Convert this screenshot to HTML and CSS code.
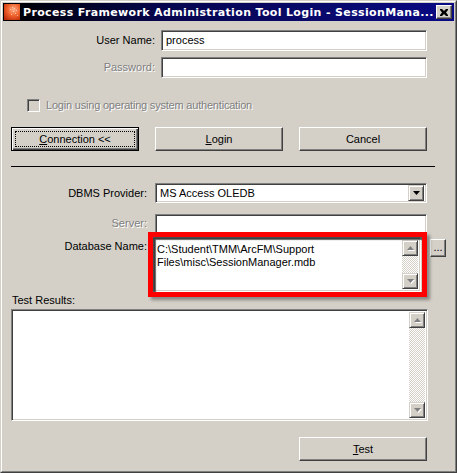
FILE: index.html
```html
<!DOCTYPE html>
<html>
<head>
<meta charset="utf-8">
<link rel="stylesheet" href="styles.css">
</head>
<body>
<div class="window">
  <div class="window-inner">
    <div class="titlebar">
      <svg class="app-icon" width="16" height="16" viewBox="0 0 16 16">
        <defs>
          <radialGradient id="ig" cx="0.6" cy="0.35" r="0.8">
            <stop offset="0" stop-color="#ffb08a"/>
            <stop offset="0.5" stop-color="#f0602a"/>
            <stop offset="1" stop-color="#b82808"/>
          </radialGradient>
        </defs>
        <rect x="0" y="0" width="16" height="16" fill="url(#ig)"/>
        <g fill="#ffd2bc" opacity="0.8">
          <rect x="8" y="3" width="1" height="1"/><rect x="10" y="4" width="1" height="1"/>
          <rect x="12" y="6" width="1" height="1"/><rect x="9" y="7" width="1" height="1"/>
          <rect x="11" y="9" width="1" height="1"/><rect x="7" y="10" width="1" height="1"/>
          <rect x="13" y="11" width="1" height="1"/><rect x="6" y="5" width="1" height="1"/>
        </g>
      </svg>
      <span class="title">Process Framework Administration Tool Login - SessionMana...</span>
      <div class="close-btn">
        <svg width="8" height="7" viewBox="0 0 8 7"><path d="M0 0h2l2 2 2-2h2v1l-2 2.5 2 2.5v1h-2l-2-2-2 2h-2v-1l2-2.5-2-2.5z" fill="#000"/></svg>
      </div>
    </div>

    <div class="content">
      <div class="row r-user">
        <label class="lbl lbl-login">User Name:</label>
        <div class="field text-field">process</div>
      </div>
      <div class="row r-pass">
        <label class="lbl lbl-login disabled">Password:</label>
        <div class="field text-field"></div>
      </div>
      <div class="row r-check">
        <span class="checkbox"></span>
        <span class="disabled">Login using operating system authentication</span>
      </div>
      <div class="row r-buttons">
        <button class="btn default"><span class="focus-rect"><u>C</u>onnection &lt;&lt;</span></button>
        <button class="btn"><u>L</u>ogin</button>
        <button class="btn">Cancel</button>
      </div>
      <div class="separator"></div>

      <div class="row r-dbms">
        <label class="lbl lbl-conn">DBMS Provider:</label>
        <div class="field select">
          <span class="select-text">MS Access OLEDB</span>
          <span class="drop-btn"><svg width="7" height="4" viewBox="0 0 7 4"><path d="M0 0h7L3.5 4z" fill="#000"/></svg></span>
        </div>
      </div>
      <div class="row r-server">
        <label class="lbl lbl-conn disabled">Server:</label>
        <div class="field server"></div>
      </div>
      <div class="row r-db">
        <label class="lbl lbl-conn db-lbl">Database Name:</label>
        <div class="highlight">
          <div class="field multi">
            <div class="multi-text">C:\Student\TMM\ArcFM\Support<br>Files\misc\SessionManager.mdb</div>
            <div class="scrollbar">
              <span class="sb-btn"><svg width="7" height="4" viewBox="0 0 7 4"><path d="M3.5 0L7 4H0z"/></svg></span>
              <span class="sb-track"></span>
              <span class="sb-btn"><svg width="7" height="4" viewBox="0 0 7 4"><path d="M0 0h7L3.5 4z"/></svg></span>
            </div>
          </div>
        </div>
        <button class="btn mini">...</button>
      </div>

      <div class="test-label">Test Results:</div>
      <div class="field results">
        <div class="results-text"></div>
        <div class="scrollbar">
          <span class="sb-btn"><svg width="7" height="4" viewBox="0 0 7 4"><path d="M3.5 0L7 4H0z"/></svg></span>
          <span class="sb-track"></span>
          <span class="sb-btn"><svg width="7" height="4" viewBox="0 0 7 4"><path d="M0 0h7L3.5 4z"/></svg></span>
        </div>
      </div>
      <div class="row r-test">
        <button class="btn"><u>T</u>est</button>
      </div>
    </div>
  </div>
</div>
</body>
</html>
```

FILE: styles.css
```css
* { box-sizing: border-box; }

body {
  margin: 0;
  width: 457px;
  height: 473px;
  overflow: hidden;
  font-family: "Liberation Sans", Arial, sans-serif;
  font-size: 11px;
  line-height: 13px;
  color: #000;
}

.window {
  width: 457px;
  height: 473px;
  background: #d4d0c8;
  border: 1px solid;
  border-color: #d4d0c8 #404040 #404040 #d4d0c8;
}

.window-inner {
  height: 100%;
  border: 1px solid;
  border-color: #fff #808080 #808080 #fff;
  padding: 1px;
  display: flex;
  flex-direction: column;
}

.titlebar {
  height: 18px;
  flex: none;
  display: flex;
  align-items: center;
  background: linear-gradient(90deg, #000000 0%, #06064e 35%, #0a0a84 100%);
  padding: 0 2px 0 1px;
}

.app-icon { flex: none; display: block; }

.title {
  margin-left: 3px;
  flex: 1;
  color: #fff;
  font-family: "DejaVu Sans", Verdana, sans-serif;
  font-weight: bold;
  font-size: 11px;
  letter-spacing: 0.35px;
  white-space: nowrap;
  overflow: hidden;
}

.close-btn {
  flex: none;
  width: 16px;
  height: 14px;
  background: #d4d0c8;
  border: 1px solid;
  border-color: #fff #404040 #404040 #fff;
  box-shadow: inset -1px -1px #808080;
  display: flex;
  align-items: center;
  justify-content: center;
}
.close-btn svg { display: block; margin-left: -1px; }

.content {
  flex: 1;
  display: flex;
  flex-direction: column;
}

.row { display: flex; flex: none; }

.lbl {
  flex: none;
  text-align: right;
  white-space: nowrap;
}
.lbl-login { width: 152px; margin-right: 6px; }
.lbl-conn { width: 144px; margin-right: 8px; }

.disabled {
  color: #808080;
  text-shadow: 1px 1px 0 #fff;
}

.field {
  background: #fff;
  border: 1px solid;
  border-color: #808080 #fff #fff #808080;
  box-shadow: inset 1px 1px #404040, inset -1px -1px #d4d0c8;
}

.r-user { margin-top: 9px; height: 21px; align-items: center; }
.r-pass { margin-top: 6px; height: 21px; align-items: center; }
.text-field {
  width: 266px;
  height: 21px;
  padding: 3px 4px;
}

.r-check { margin-top: 21px; height: 13px; align-items: center; padding-left: 24px; }
.r-check .disabled { letter-spacing: -0.2px; }
.checkbox {
  width: 13px;
  height: 13px;
  margin-right: 6px;
  background: #d4d0c8;
  border: 1px solid;
  border-color: #808080 #fff #fff #808080;
  box-shadow: inset 1px 1px #404040, inset -1px -1px #d4d0c8;
}

.btn {
  font: inherit;
  color: #000;
  background: #d4d0c8;
  width: 128px;
  height: 24px;
  padding: 0;
  border: 1px solid;
  border-color: #fff #404040 #404040 #fff;
  box-shadow: inset -1px -1px #808080, inset 1px 1px #d4d0c8;
  text-align: center;
}

.r-buttons { margin-top: 15px; height: 24px; padding-left: 8px; gap: 16px; }
.btn.default {
  border: 1px solid #000;
  box-shadow: inset 1px 1px #fff, inset -1px -1px #404040, inset -2px -2px #808080;
  padding: 3px;
}
.focus-rect {
  display: flex;
  align-items: center;
  justify-content: center;
  height: 100%;
  border: 1px dotted #000;
}

.separator {
  flex: none;
  margin: 15px 0 0 8px;
  width: 424px;
  height: 1px;
  background: #000;
}

.r-dbms { margin-top: 16px; height: 20px; align-items: center; }
.select {
  width: 272px;
  height: 20px;
  display: flex;
  align-items: center;
  padding: 2px 2px 2px 4px;
}
.select-text { flex: 1; }
.drop-btn {
  width: 16px;
  height: 16px;
  background: #d4d0c8;
  border: 1px solid;
  border-color: #d4d0c8 #404040 #404040 #d4d0c8;
  box-shadow: inset 1px 1px #fff, inset -1px -1px #808080;
  display: flex;
  align-items: center;
  justify-content: center;
}
.drop-btn svg { display: block; }

.r-server { margin-top: 11px; height: 18px; align-items: flex-start; }
.r-server .lbl { margin-top: 3px; }
.server {
  width: 272px;
  height: 20px;
}

.r-db { height: 65px; align-items: flex-start; }
.r-db .lbl-conn { margin-right: 1px; }
.db-lbl { margin-top: 8px; }

.highlight {
  position: relative;
  width: 279px;
  height: 65px;
  border: 5px solid #ff0000;
  box-shadow: 3px 3px 3px rgba(0, 0, 0, 0.35);
}
.highlight::after {
  content: "";
  position: absolute;
  inset: 0;
  box-shadow: inset 3px 3px 1px rgba(60, 60, 60, 0.8);
  pointer-events: none;
}

.multi {
  width: 268px;
  height: 55px;
  display: flex;
  padding: 2px;
}
.multi-text {
  flex: 1;
  padding: 3px 1px;
  white-space: nowrap;
}

.scrollbar {
  width: 16px;
  flex: none;
  display: flex;
  flex-direction: column;
}
.sb-btn {
  flex: none;
  width: 16px;
  height: 16px;
  background: #d4d0c8;
  border: 1px solid;
  border-color: #d4d0c8 #404040 #404040 #d4d0c8;
  box-shadow: inset 1px 1px #fff, inset -1px -1px #808080;
  display: flex;
  align-items: center;
  justify-content: center;
}
.sb-btn svg { display: block; fill: #808080; filter: drop-shadow(1px 1px 0 #fff); }
.sb-track {
  flex: 1;
  background: repeating-conic-gradient(#fff 0 25%, #d4d0c8 0 50%) 0 0 / 2px 2px;
}

.mini {
  width: 16px;
  height: 18px;
  margin: 7px 0 0 3px;
  line-height: 10px;
  padding-bottom: 2px;
}

.test-label {
  flex: none;
  margin: -3px 0 0 9px;
  height: 13px;
}

.results {
  flex: none;
  margin: 2px 0 0 8px;
  width: 417px;
  height: 112px;
  display: flex;
  padding: 2px;
}
.results-text { flex: 1; }

.r-test { margin-top: 16px; height: 24px; padding-left: 296px; }
```
